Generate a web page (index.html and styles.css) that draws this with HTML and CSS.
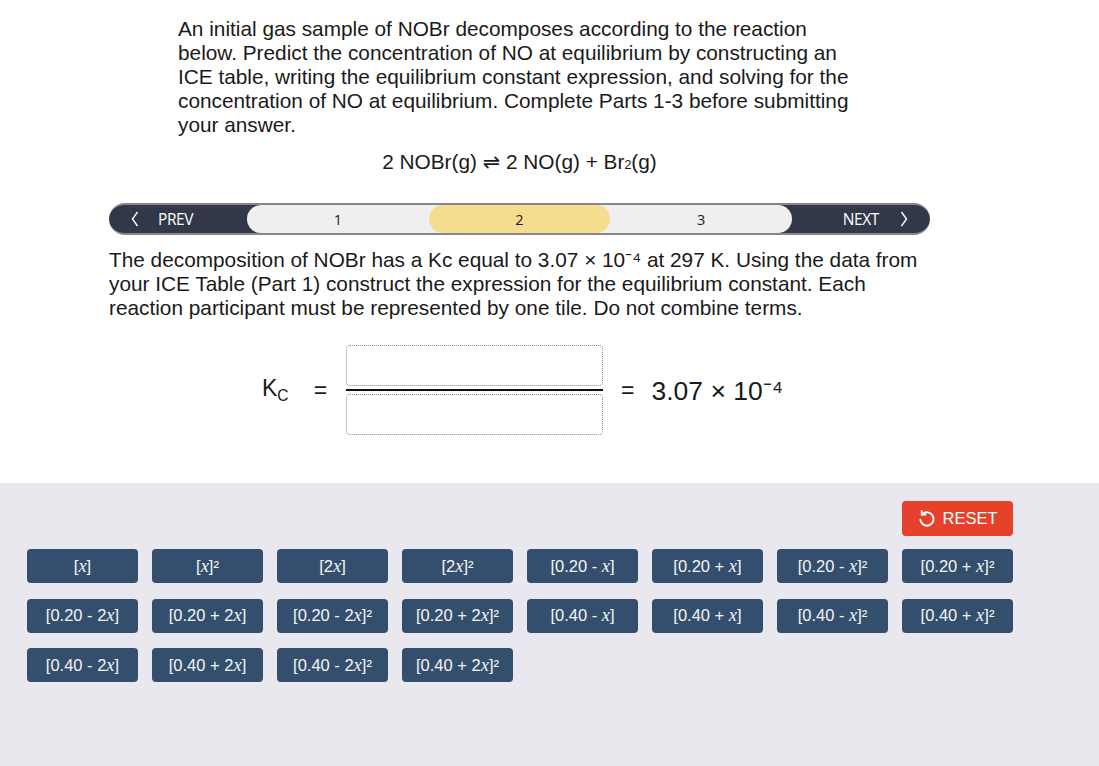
FILE: index.html
```html
<!DOCTYPE html>
<html lang="en">
<head>
  <meta charset="UTF-8">
  <meta name="viewport" content="width=device-width, initial-scale=1">
  <title>Equilibrium Constant Expression</title>
  <link rel="stylesheet" href="styles.css">
</head>
<body>
  <!-- Question area -->
  <div class="page">
    <div class="intro">
      <p>An initial gas sample of NOBr decomposes according to the reaction below. Predict the concentration of NO at equilibrium by constructing an ICE table, writing the equilibrium constant expression, and solving for the concentration of NO at equilibrium. Complete Parts 1-3 before submitting your answer.</p>
      <p class="reaction">2 NOBr(g) <span class="arrow">&#8652;</span> 2 NO(g) + Br<sub>2</sub>(g)</p>
    </div>

    <!-- Step navigation -->
    <nav class="steps">
      <button class="step-btn prev">
        <svg width="10" height="18" viewBox="0 0 10 18"><polyline points="7.5 2 2.5 9 7.5 16" fill="none" stroke="#fff" stroke-width="1.4"/></svg>
        PREV
      </button>
      <div class="step-track">
        <span class="step">1</span>
        <span class="step active">2</span>
        <span class="step">3</span>
      </div>
      <button class="step-btn next">
        NEXT
        <svg width="10" height="18" viewBox="0 0 10 18"><polyline points="2.5 2 7.5 9 2.5 16" fill="none" stroke="#fff" stroke-width="1.4"/></svg>
      </button>
    </nav>

    <p class="prompt">The decomposition of NOBr has a Kc equal to 3.07 &times; 10⁻⁴ at 297 K. Using the data from your ICE Table (Part 1) construct the expression for the equilibrium constant. Each reaction participant must be represented by one tile. Do not combine terms.</p>

    <!-- Kc expression with drop zones -->
    <div class="expr">
      <span class="kc">K<sub>C</sub></span>
      <span class="eq">=</span>
      <div class="fraction">
        <div class="drop"></div>
        <div class="bar"></div>
        <div class="drop"></div>
      </div>
      <span class="eq eq-right">=</span>
      <span class="value">3.07 &times; 10⁻⁴</span>
    </div>
  </div>

  <!-- Tile tray -->
  <section class="tray">
    <div class="tray-head">
      <button class="reset">
        <svg width="20" height="20" viewBox="0 0 24 24" fill="none" stroke="#fff" stroke-width="2.3" stroke-linecap="round"><path d="M6.3 6.3A8 8 0 1 1 4 13"/><polyline points="5.6 2.4 5.8 6.8 10.2 6.6"/></svg>
        RESET
      </button>
    </div>
    <div class="tiles">
      <button class="tile">[<i>x</i>]</button>
      <button class="tile">[<i>x</i>]²</button>
      <button class="tile">[2<i>x</i>]</button>
      <button class="tile">[2<i>x</i>]²</button>
      <button class="tile">[0.20 - <i>x</i>]</button>
      <button class="tile">[0.20 + <i>x</i>]</button>
      <button class="tile">[0.20 - <i>x</i>]²</button>
      <button class="tile">[0.20 + <i>x</i>]²</button>

      <button class="tile">[0.20 - 2<i>x</i>]</button>
      <button class="tile">[0.20 + 2<i>x</i>]</button>
      <button class="tile">[0.20 - 2<i>x</i>]²</button>
      <button class="tile">[0.20 + 2<i>x</i>]²</button>
      <button class="tile">[0.40 - <i>x</i>]</button>
      <button class="tile">[0.40 + <i>x</i>]</button>
      <button class="tile">[0.40 - <i>x</i>]²</button>
      <button class="tile">[0.40 + <i>x</i>]²</button>

      <button class="tile">[0.40 - 2<i>x</i>]</button>
      <button class="tile">[0.40 + 2<i>x</i>]</button>
      <button class="tile">[0.40 - 2<i>x</i>]²</button>
      <button class="tile">[0.40 + 2<i>x</i>]²</button>
    </div>
  </section>
</body>
</html>
```

FILE: styles.css
```css
/* Basic reset */
* {
  margin: 0;
  padding: 0;
  box-sizing: border-box;
}
body {
  font-family: 'Liberation Sans', Arial, sans-serif;
  background: #fff;
  color: #1a1a1a;
}
button {
  border: none;
  cursor: pointer;
  font: inherit;
}

/* Question column */
.page {
  width: 821px;
  margin-left: 109px;
}
.intro {
  padding: 17px 69px 0;
  font-size: 20.8px;
  line-height: 24px;
}
.reaction {
  margin-top: 13px;
  text-align: center;
}
.reaction sub {
  font-size: 0.6em;
  vertical-align: 0;
}
.arrow {
  font-family: 'DejaVu Sans', sans-serif;
}

/* PREV / steps / NEXT bar */
.steps {
  margin-top: 26px;
  height: 32px;
  display: flex;
  background: #323848;
  border-top: 2px solid #878787;
  border-bottom: 2px solid #878787;
  border-radius: 16px;
}
.step-btn {
  width: 138px;
  background: transparent;
  color: #fff;
  font-family: 'Open Sans', sans-serif;
  font-size: 15.5px;
  letter-spacing: -0.4px;
  display: flex;
  align-items: center;
}
.step-btn.prev {
  padding-left: 21px;
  gap: 18px;
}
.step-btn.next {
  justify-content: flex-end;
  padding-right: 21px;
  gap: 20px;
}
.step-track {
  flex: 1;
  display: flex;
  background: #efefef;
  border-radius: 14px;
}
.step {
  flex: 1;
  display: flex;
  align-items: center;
  justify-content: center;
  font-family: 'Open Sans', sans-serif;
  font-size: 14.5px;
  color: #222;
  border-radius: 14px;
}
.step.active {
  background: #f5dc8f;
}

/* Part 2 prompt */
.prompt {
  margin-top: 13px;
  font-size: 20.8px;
  line-height: 24px;
}

/* Kc = numerator / denominator */
.expr {
  margin-top: 25px;
  display: flex;
  align-items: center;
  padding-left: 153px;
}
.kc {
  font-size: 23px;
}
.kc sub {
  font-size: 0.68em;
  vertical-align: -0.3em;
}
.eq {
  font-size: 23px;
  margin-left: 25px;
  margin-right: 19px;
}
.eq-right {
  margin-left: 18px;
  margin-right: 17px;
}
.fraction {
  width: 257px;
  display: flex;
  flex-direction: column;
}
.drop {
  height: 41px;
  border: 1px dotted #7d8aa3;
  border-radius: 4px;
}
.bar {
  height: 2px;
  margin: 3px 0;
  background: #111;
}
.value {
  font-size: 26.5px;
}

/* Tile tray */
.tray {
  margin-top: 48px;
  min-height: 283px;
  background: #e9e8ef;
  padding: 18px 0 0 27px;
}
.tray-head {
  width: 986px;
  display: flex;
  justify-content: flex-end;
}
.reset {
  width: 111px;
  height: 35px;
  background: #e6412b;
  color: #fff;
  border-radius: 4px;
  font-size: 16.5px;
  display: flex;
  align-items: center;
  justify-content: center;
  gap: 5px;
}
.tiles {
  margin-top: 13px;
  display: grid;
  grid-template-columns: repeat(8, 111px);
  column-gap: 14px;
  row-gap: 15.5px;
}
.tile {
  height: 34px;
  background: #344f6e;
  color: #f4f4f4;
  border-radius: 4px;
  font-size: 16.5px;
  white-space: nowrap;
}
.tile i {
  font-family: 'Liberation Serif', serif;
  font-size: 18.5px;
}
```
